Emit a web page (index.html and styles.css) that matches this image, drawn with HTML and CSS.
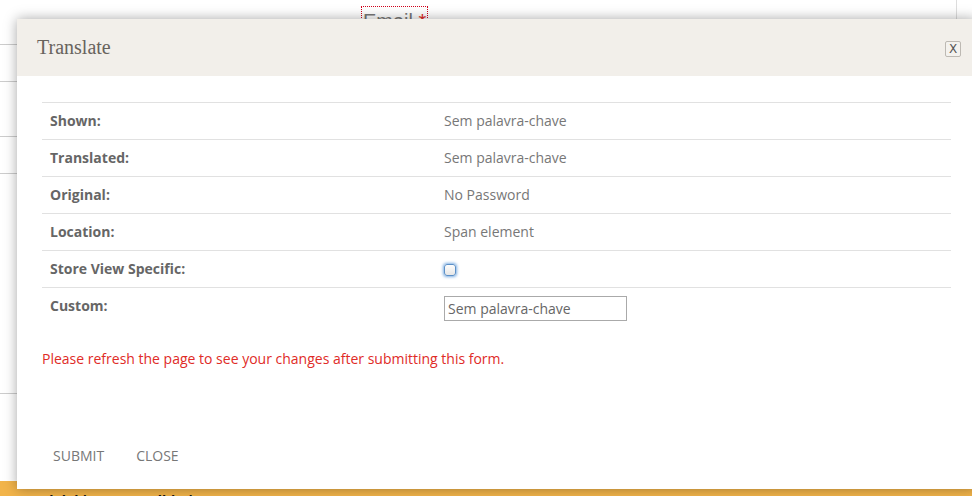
FILE: index.html
```html
<!DOCTYPE html>
<html lang="pt">
<head>
    <meta charset="UTF-8">
    <meta name="viewport" content="width=device-width, initial-scale=1.0">
    <title>Translate</title>
    <link rel="stylesheet" href="styles.css">
</head>
<body>
    <div class="page">
        <div class="sidebar">
            <div class="side-item" style="height: 45px"></div>
            <div class="side-item" style="height: 37px"></div>
            <div class="side-item" style="height: 55px"></div>
            <div class="side-item" style="height: 37px"></div>
            <div class="side-item" style="height: 220px"></div>
        </div>
        <div class="main">
            <label class="field-label">Email <span class="required">*</span></label>
        </div>
        <div class="aside"></div>
    </div>
    <div class="footer-bar">
        <span class="footer-links">Inicial | Fazer Pedido | Contato</span>
    </div>

    <div class="modal">
        <div class="modal-header">
            <h2 class="modal-title">Translate</h2>
            <button class="modal-x" type="button">X</button>
        </div>
        <div class="modal-body">
            <div class="info-table">
                <div class="info-row">
                    <div class="info-label">Shown:</div>
                    <div class="info-value">Sem palavra-chave</div>
                </div>
                <div class="info-row">
                    <div class="info-label">Translated:</div>
                    <div class="info-value">Sem palavra-chave</div>
                </div>
                <div class="info-row">
                    <div class="info-label">Original:</div>
                    <div class="info-value">No Password</div>
                </div>
                <div class="info-row">
                    <div class="info-label">Location:</div>
                    <div class="info-value">Span element</div>
                </div>
                <div class="info-row">
                    <div class="info-label">Store View Specific:</div>
                    <div class="info-value"><input type="checkbox" class="check"></div>
                </div>
                <div class="info-row info-row-input">
                    <div class="info-label">Custom:</div>
                    <div class="info-value"><input type="text" class="text-input" value="Sem palavra-chave"></div>
                </div>
            </div>
            <p class="notice">Please refresh the page to see your changes after submitting this form.</p>
        </div>
        <div class="modal-footer">
            <button class="action" type="button">Submit</button>
            <button class="action" type="button">Close</button>
        </div>
    </div>
</body>
</html>
```

FILE: styles.css
```css
* {
    box-sizing: border-box;
    margin: 0;
    padding: 0;
}

html, body {
    width: 972px;
    height: 496px;
    overflow: hidden;
}

body {
    font-family: "Open Sans", "Liberation Sans", sans-serif;
    background-color: #fff;
    position: relative;
}

/* page behind the dialog */
.page {
    display: flex;
    height: 481px;
}

.sidebar {
    width: 340px;
}

.side-item {
    border-bottom: 1px solid #ccc;
}

.main {
    flex: 1;
    padding: 7px 0 0 22px;
}

.field-label {
    display: inline-block;
    outline: 1px dotted #d0021b;
    padding: 2px 1px 0;
    font-family: "Liberation Sans", Arial, sans-serif;
    font-size: 20px;
    line-height: 24px;
    color: #777;
}

.required {
    color: #e02b27;
}

.aside {
    width: 16px;
    border-left: 1px solid #ddd;
}

.footer-bar {
    height: 15px;
    background: #f2b44a;
    padding: 8px 0 0 36px;
}

.footer-links {
    font-family: "Liberation Sans", Arial, sans-serif;
    font-weight: bold;
    font-size: 15px;
    line-height: 17px;
    color: #111;
}

/* dialog */
.modal {
    position: absolute;
    top: 19px;
    left: 17px;
    width: 959px;
    height: 470px;
    background: #fff;
    box-shadow: 0 0 12px rgba(0, 0, 0, 0.35);
    display: flex;
    flex-direction: column;
}

.modal-header {
    height: 57px;
    background: #f2efea;
    display: flex;
    align-items: center;
    justify-content: space-between;
    padding: 0 15px 0 20px;
}

.modal-title {
    font-family: "Liberation Serif", "Times New Roman", serif;
    font-weight: normal;
    font-size: 20px;
    color: #68635d;
    margin-top: -1px;
}

.modal-x {
    width: 16px;
    height: 16px;
    border: 1px solid #bdb9b3;
    border-radius: 2px;
    background: #f4f2ee;
    font-family: "DejaVu Sans", sans-serif;
    font-size: 12px;
    line-height: 14px;
    color: #555;
    margin-top: 3px;
}

.modal-body {
    padding: 26px 25px 0;
}

.info-row {
    display: grid;
    grid-template-columns: 402px 1fr;
    border-top: 1px solid #e1e1e1;
    padding: 8px 0;
    font-size: 14px;
    line-height: 20px;
}

.info-label {
    padding-left: 8px;
    font-weight: bold;
    color: #666;
}

.info-value {
    color: #777;
    display: flex;
    align-items: center;
}

.check {
    appearance: none;
    width: 12px;
    height: 12px;
    border: 1px solid #5b8fc7;
    border-radius: 3px;
    background: linear-gradient(#fdfdfd, #e6e6e6);
    box-shadow: 0 0 3px 1px rgba(70, 140, 215, 0.7);
    margin-top: 1px;
}

.text-input {
    width: 183px;
    height: 25px;
    border: 1px solid #aaa;
    padding: 0 3px;
    font-family: "Open Sans", "Liberation Sans", sans-serif;
    font-size: 14px;
    color: #666;
}

.notice {
    margin-top: 20px;
    font-size: 14px;
    line-height: 20px;
    color: #e02b27;
}

.modal-footer {
    margin-top: auto;
    padding: 0 25px 23px;
    display: flex;
    gap: 10px;
}

.action {
    background: none;
    border: 0;
    padding: 0 11px;
    font-family: "Open Sans", "Liberation Sans", sans-serif;
    font-size: 14px;
    line-height: 20px;
    text-transform: uppercase;
    color: #777;
}
```
